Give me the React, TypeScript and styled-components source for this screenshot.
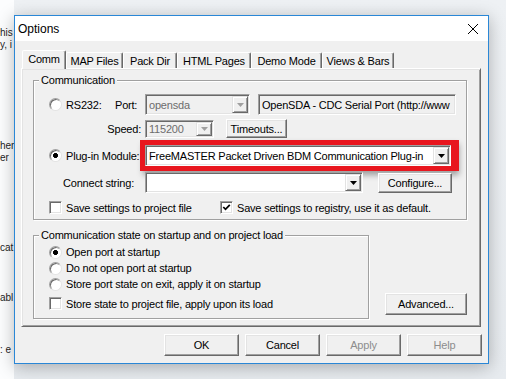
import styled, { createGlobalStyle } from "styled-components";

const Global = createGlobalStyle`
  html, body { margin: 0; padding: 0; }
  body {
    width: 506px;
    height: 379px;
    overflow: hidden;
    background: #eceff3;
    font-family: "Liberation Sans", Arial, sans-serif;
  }
`;

const Desktop = styled.div`
  display: flex;
  align-items: flex-start;
  width: 506px;
  height: 379px;
  overflow: hidden;
  background: linear-gradient(#eef1f4, #e7ebef);
`;

const BackDoc = styled.div`
  flex: none;
  width: 14px;
  height: 100%;
  display: flex;
  flex-direction: column;
  overflow: hidden;
  background: #fcfdfe;
`;

const BackLine = styled.div<{ $mt: number }>`
  margin-top: ${(p) => p.$mt}px;
  height: 12px;
  line-height: 12px;
  font-size: 10px;
  color: #1e1e1e;
  white-space: nowrap;
`;

const Window = styled.div`
  position: relative;
  z-index: 1;
  flex: none;
  margin-top: 15px;
  width: 475px;
  height: 349px;
  box-sizing: border-box;
  display: flex;
  flex-direction: column;
  border: 1px solid #2a87d6;
  background: #f0f0f0;
  box-shadow: 0 3px 16px rgba(0, 0, 0, 0.28);
`;

const TitleBar = styled.div`
  height: 25px;
  flex: none;
  display: flex;
  align-items: center;
  justify-content: space-between;
  padding: 0 10px 0 3px;
  background: #fff;
  font-size: 12px;
  color: #000;
`;

const Client = styled.div`
  flex: 1;
  display: flex;
  flex-direction: column;
  padding: 9px 6px 7px 6px;
  font-size: 11px;
  letter-spacing: -0.2px;
  color: #000;
`;

const TabStrip = styled.div`
  position: relative;
  z-index: 1;
  display: flex;
  align-items: flex-end;
  height: 18px;
  padding-left: 1px;
`;

const Tab = styled.div<{ $w: number; $active?: boolean }>`
  box-sizing: border-box;
  width: ${(p) => p.$w}px;
  height: ${(p) => (p.$active ? 19 : 16)}px;
  margin-bottom: ${(p) => (p.$active ? -1 : 0)}px;
  padding-bottom: ${(p) => (p.$active ? 3 : 0)}px;
  display: flex;
  align-items: center;
  justify-content: center;
  white-space: nowrap;
  background: #f0f0f0;
  border: 1px solid;
  border-bottom: none;
  border-color: #fff #696969 transparent #fff;
  border-radius: 2px 2px 0 0;
  box-shadow: inset -1px 0 0 #a0a0a0;
`;

const Panel = styled.div`
  box-sizing: border-box;
  width: 460px;
  height: 259px;
  padding: 11px 0 0 11px;
  border: 1px solid;
  border-color: #fff #696969 #696969 #fff;
  box-shadow: inset 1px 1px 0 #e3e3e3, inset -1px -1px 0 #a0a0a0;
`;

const Group = styled.div<{ $w: number; $h: number; $pt: number }>`
  position: relative;
  box-sizing: border-box;
  width: ${(p) => p.$w}px;
  height: ${(p) => p.$h}px;
  padding: ${(p) => p.$pt}px 0 0 15px;
  border: 1px solid #a0a0a0;
  box-shadow: 1px 1px 0 #fff, inset 1px 1px 0 #fff;
`;

const Caption = styled.span`
  position: absolute;
  top: -7px;
  left: 5px;
  padding: 0 2px;
  line-height: 13px;
  background: #f0f0f0;
  white-space: nowrap;
`;

const Row = styled.div<{ $mt?: number; $h?: number }>`
  display: flex;
  align-items: center;
  height: ${(p) => p.$h ?? 21}px;
  margin-top: ${(p) => p.$mt ?? 0}px;
  white-space: nowrap;
`;

const LabelCell = styled.div<{ $pl?: number; $end?: boolean }>`
  flex: none;
  box-sizing: border-box;
  width: 96px;
  display: flex;
  align-items: center;
  gap: 4px;
  padding-left: ${(p) => p.$pl ?? 0}px;
  padding-right: ${(p) => (p.$end ? 4 : 0)}px;
  justify-content: ${(p) => (p.$end ? "flex-end" : "flex-start")};
`;

const Fixed = styled.span<{ $w: number }>`
  flex: none;
  width: ${(p) => p.$w}px;
`;

const Item = styled.label<{ $w?: number }>`
  display: flex;
  align-items: center;
  gap: 4px;
  flex: none;
  width: ${(p) => (p.$w ? `${p.$w}px` : "auto")};
`;

const Radio = styled.span<{ $on?: boolean }>`
  flex: none;
  box-sizing: border-box;
  width: 13px;
  height: 13px;
  border-radius: 50%;
  background: ${(p) =>
    p.$on ? "radial-gradient(circle, #000 0 2.2px, #fff 2.7px)" : "#fff"};
  border: 1px solid;
  border-color: #a0a0a0 #e3e3e3 #e3e3e3 #a0a0a0;
  box-shadow: inset 1px 1px 0 #696969;
`;

const Check = styled.span`
  flex: none;
  box-sizing: border-box;
  width: 13px;
  height: 13px;
  display: flex;
  align-items: center;
  justify-content: center;
  background: #fff;
  border: 1px solid;
  border-color: #a0a0a0 #fff #fff #a0a0a0;
  box-shadow: inset 1px 1px 0 #696969, inset -1px -1px 0 #e3e3e3;
`;

const Combo = styled.div<{ $w: number; $h?: number; $ml?: number; $off?: boolean; $hl?: boolean }>`
  flex: none;
  box-sizing: border-box;
  width: ${(p) => p.$w}px;
  height: ${(p) => p.$h ?? 21}px;
  margin-left: ${(p) => p.$ml ?? 0}px;
  padding: 1px;
  display: flex;
  background: ${(p) => (p.$off ? "#f0f0f0" : "#fff")};
  color: ${(p) => (p.$off ? "#6d6d6d" : "#000")};
  border: 1px solid;
  border-color: #a0a0a0 #fff #fff #a0a0a0;
  box-shadow: inset 1px 1px 0 #696969, inset -1px -1px 0 #e3e3e3
    ${(p) =>
      p.$hl
        ? ", 0 0 0 5px #e8161e, 3px 0 0 5px #e8161e, 3px 4px 6px 5px rgba(0,0,0,0.35)"
        : ""};
`;

const ComboText = styled.span`
  flex: 1;
  display: flex;
  align-items: center;
  padding-left: 2px;
  overflow: hidden;
`;

const ComboButton = styled.span`
  flex: none;
  box-sizing: border-box;
  width: 16px;
  display: flex;
  align-items: center;
  justify-content: center;
  background: #f0f0f0;
  border: 1px solid;
  border-color: #e3e3e3 #696969 #696969 #e3e3e3;
  box-shadow: inset 1px 1px 0 #fff, inset -1px -1px 0 #a0a0a0;
`;

const TextBox = styled.div<{ $w: number; $ml?: number }>`
  flex: none;
  box-sizing: border-box;
  width: ${(p) => p.$w}px;
  height: 21px;
  margin-left: ${(p) => p.$ml ?? 0}px;
  padding-left: 3px;
  display: flex;
  align-items: center;
  overflow: hidden;
  background: #f0f0f0;
  border: 1px solid;
  border-color: #a0a0a0 #fff #fff #a0a0a0;
  box-shadow: inset 1px 1px 0 #696969, inset -1px -1px 0 #e3e3e3;
`;

const Button = styled.button<{ $w: number; $h?: number; $ml?: number }>`
  flex: none;
  box-sizing: border-box;
  width: ${(p) => p.$w}px;
  height: ${(p) => p.$h ?? 22}px;
  margin: 0 0 0 ${(p) => p.$ml ?? 0}px;
  padding: 0;
  font: inherit;
  letter-spacing: inherit;
  color: #000;
  background: #f0f0f0;
  border: 1px solid;
  border-color: #fff #696969 #696969 #fff;
  box-shadow: inset -1px -1px 0 #a0a0a0, inset 1px 1px 0 #e3e3e3;
  &:disabled {
    color: #8d8d8d;
  }
`;

const LowerArea = styled.div`
  display: flex;
  align-items: flex-end;
  width: 434px;
  margin-top: 15px;
`;

const AdvancedButton = styled(Button)`
  margin-left: auto;
  margin-bottom: 4px;
`;

const Footer = styled.div`
  display: flex;
  justify-content: flex-end;
  gap: 6px;
  margin-top: 7px;
`;

const Arrow = ({ off }: { off?: boolean }) => (
  <svg width="7" height="4" viewBox="0 0 7 4">
    <polygon points="0,0 7,0 3.5,4" fill={off ? "#a0a0a0" : "#000"} />
  </svg>
);

const Tick = () => (
  <svg width="9" height="9" viewBox="0 0 9 9">
    <polyline points="1.3,4 3.5,6.3 7.8,1.8" fill="none" stroke="#000" strokeWidth="1.8" />
  </svg>
);

const CloseIcon = () => (
  <svg width="10" height="10" viewBox="0 0 10 10">
    <path d="M0 0 L10 10 M10 0 L0 10" stroke="#000" strokeWidth="1" />
  </svg>
);

const DropDown = (props: {
  w: number;
  h?: number;
  ml?: number;
  off?: boolean;
  hl?: boolean;
  value?: string;
}) => (
  <Combo $w={props.w} $h={props.h} $ml={props.ml} $off={props.off} $hl={props.hl}>
    <ComboText>{props.value}</ComboText>
    <ComboButton>
      <Arrow off={props.off} />
    </ComboButton>
  </Combo>
);

const backLines = [
  { t: "his", mt: 27 },
  { t: "y, i", mt: 0 },
  { t: "her", mt: 89 },
  { t: "er", mt: 0 },
  { t: "cat", mt: 78 },
  { t: "abl", mt: 38 },
  { t: ": e", mt: 40 },
];

const tabs = [
  { label: "Comm", w: 44 },
  { label: "MAP Files", w: 57 },
  { label: "Pack Dir", w: 54 },
  { label: "HTML Pages", w: 74 },
  { label: "Demo Mode", w: 71 },
  { label: "Views & Bars", w: 72 },
];

export default function App() {
  return (
    <>
      <Global />
      <Desktop>
        <BackDoc>
          {backLines.map((l, i) => (
            <BackLine key={i} $mt={l.mt}>
              {l.t}
            </BackLine>
          ))}
        </BackDoc>
        <Window>
          <TitleBar>
            <span>Options</span>
            <CloseIcon />
          </TitleBar>
          <Client>
            <TabStrip>
              {tabs.map((t, i) => (
                <Tab key={t.label} $w={t.w} $active={i === 0}>
                  {t.label}
                </Tab>
              ))}
            </TabStrip>
            <Panel>
              <Group $w={434} $h={140} $pt={13}>
                <Caption>Communication</Caption>
                <Row>
                  <LabelCell>
                    <Radio />
                    <Fixed $w={45}>RS232:</Fixed>
                    <span>Port:</span>
                  </LabelCell>
                  <DropDown w={105} off value="opensda" />
                  <TextBox $w={198} $ml={8}>
                    OpenSDA - CDC Serial Port (http://www
                  </TextBox>
                </Row>
                <Row $mt={3}>
                  <LabelCell $end>Speed:</LabelCell>
                  <DropDown w={69} h={18} off value="115200" />
                  <Button $w={61} $h={19} $ml={12}>
                    Timeouts...
                  </Button>
                </Row>
                <Row $mt={6}>
                  <LabelCell>
                    <Radio $on />
                    <span>Plug-in Module:</span>
                  </LabelCell>
                  <DropDown
                    w={306}
                    hl
                    value="FreeMASTER Packet Driven BDM Communication Plug-in"
                  />
                </Row>
                <Row $mt={6}>
                  <LabelCell $pl={14}>Connect string:</LabelCell>
                  <DropDown w={218} />
                  <Button $w={74} $h={20} $ml={15}>
                    Configure...
                  </Button>
                </Row>
                <Row $mt={8} $h={13}>
                  <Item $w={171}>
                    <Check />
                    <span>Save settings to project file</span>
                  </Item>
                  <Item>
                    <Check>
                      <Tick />
                    </Check>
                    <span>Save settings to registry, use it as default.</span>
                  </Item>
                </Row>
              </Group>
              <LowerArea>
                <Group $w={336} $h={84} $pt={8}>
                  <Caption>Communication state on startup and on project load</Caption>
                  <Row $h={16}>
                    <Item>
                      <Radio $on />
                      <span>Open port at startup</span>
                    </Item>
                  </Row>
                  <Row $h={16}>
                    <Item>
                      <Radio />
                      <span>Do not open port at startup</span>
                    </Item>
                  </Row>
                  <Row $h={16}>
                    <Item>
                      <Radio />
                      <span>Store port state on exit, apply it on startup</span>
                    </Item>
                  </Row>
                  <Row $h={13} $mt={5}>
                    <Item>
                      <Check />
                      <span>Store state to project file, apply upon its load</span>
                    </Item>
                  </Row>
                </Group>
                <AdvancedButton $w={82}>Advanced...</AdvancedButton>
              </LowerArea>
            </Panel>
            <Footer>
              <Button $w={75}>OK</Button>
              <Button $w={75}>Cancel</Button>
              <Button $w={75} disabled>
                Apply
              </Button>
              <Button $w={75} disabled>
                Help
              </Button>
            </Footer>
          </Client>
        </Window>
      </Desktop>
    </>
  );
}
